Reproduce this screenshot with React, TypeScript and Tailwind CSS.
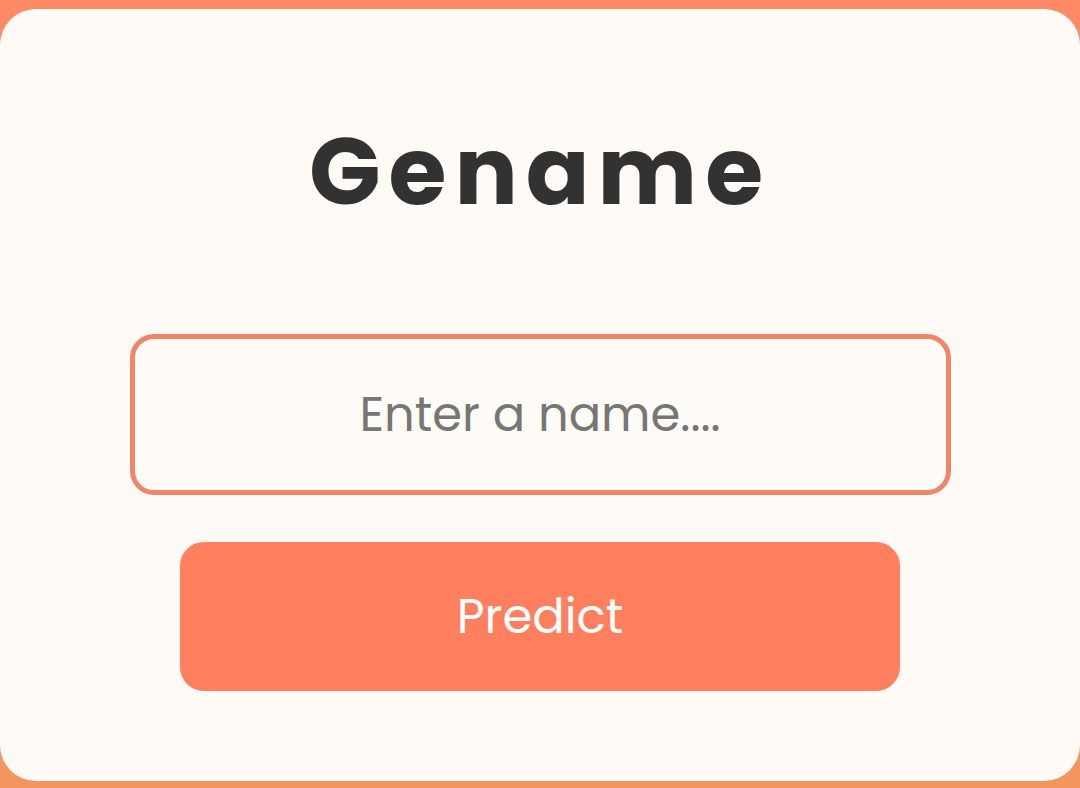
export default function App() {
  return (
    <div className="h-[788px] w-[1080px] overflow-hidden bg-gradient-to-b from-[#ff8a66] to-[#f2955f] pt-[9px] pb-[7px]">
      <div className="flex h-full w-full flex-col items-center rounded-[36px] bg-[#fffaf5] font-['Poppins','DejaVu_Sans',sans-serif]">
        <h1 className="mt-[115px] text-[94px] leading-none font-bold tracking-[8px] text-[#333232]">
          Gename
        </h1>
        <input
          type="text"
          placeholder="Enter a name...."
          className="mt-[116px] h-[161px] w-[821px] rounded-[24px] border-[5px] border-[#f0856a] bg-[#fffbf7] text-center text-[48px] text-[#333] outline-none placeholder:text-[#777575]"
        />
        <button className="mt-[47px] h-[149px] w-[720px] rounded-[24px] bg-[#ff7f5f] text-[48px] text-white">
          Predict
        </button>
      </div>
    </div>
  );
}
